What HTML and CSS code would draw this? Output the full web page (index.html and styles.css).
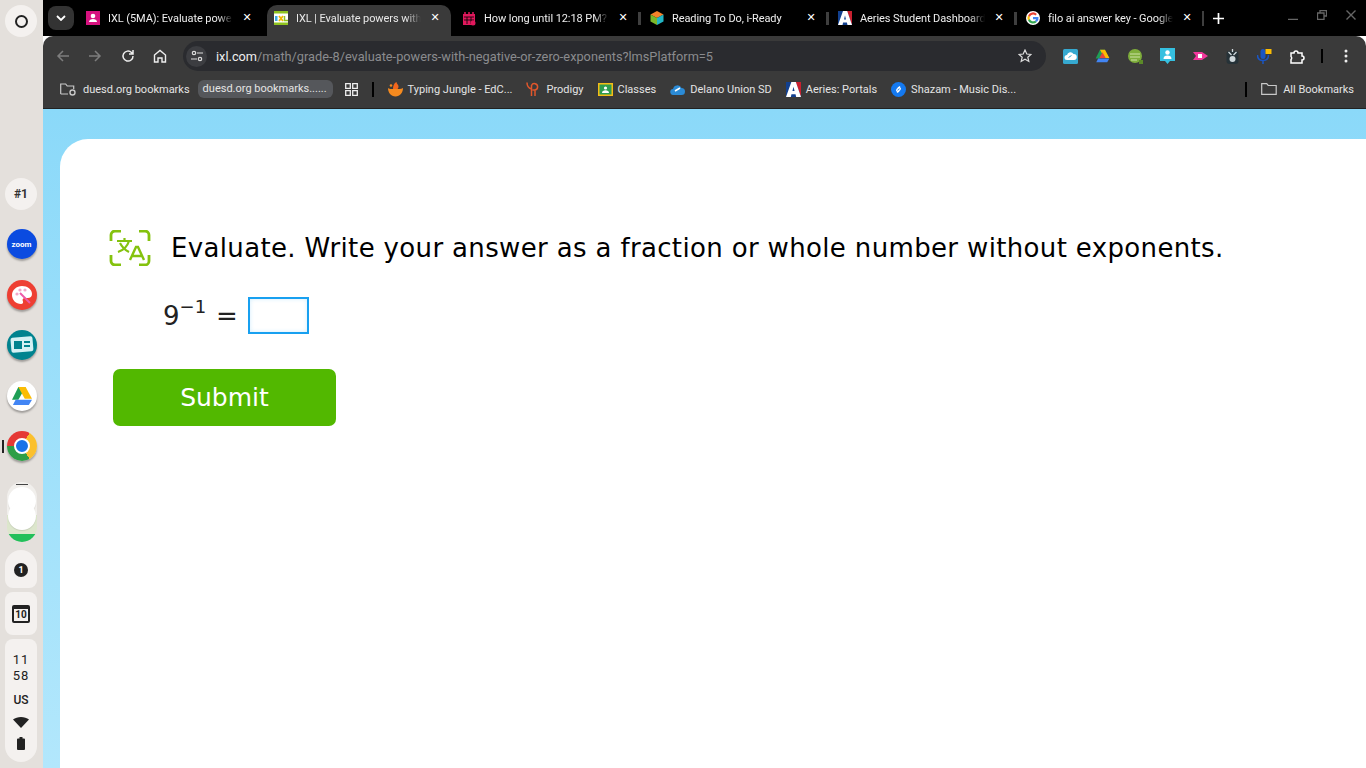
FILE: index.html
```html
<!DOCTYPE html>
<html>
    <head>
        <title>IXL | Evaluate powers with negative or zero exponents</title>
        <link rel="stylesheet" href="styles.css">
    </head>
    <body>
        <div class="shelf">
            <div class="launcher"><div class="launcher-ring"></div></div>
            <div class="pin-top">#1</div>
            <div class="app app-zoom">zoom</div>
            <div class="app app-paint">
                <svg width="22" height="22" viewBox="0 0 22 22"><path d="M11 2C5.500 2 1 6 1 11c0 5 4 9 9 9 2 0 2.500-1.500 1.800-3-.7-1.500.2-3 2-3h3c2.500 0 4.200-1.500 4.200-4C21 5.500 16.500 2 11 2z" fill="#fff"/><circle cx="6" cy="10" r="1.600" fill="#f3a6c8"/><circle cx="9" cy="6" r="1.600" fill="#f3a6c8"/><circle cx="14" cy="6" r="1.600" fill="#f3a6c8"/><path d="M9 9l10 10" stroke="#ee5aa8" stroke-width="2"/></svg>
            </div>
            <div class="app app-card">
                <svg width="24" height="20" viewBox="0 0 24 20"><rect x="1" y="2" width="22" height="15" rx="2" fill="#d5f1f4" transform="rotate(-5 12 10)"/><rect x="4" y="6" width="8" height="8" fill="#00838f"/><rect x="14" y="6" width="6" height="2" fill="#00838f"/><rect x="14" y="10" width="6" height="2" fill="#00838f"/></svg>
            </div>
            <div class="app app-drive">
                <svg width="22" height="20" viewBox="0 0 24 22"><path d="M8 1h8l-8 14H1z" fill="#1e9e55"/><path d="M8 1h8l7 13h-8z" fill="#fbbc04"/><path d="M5 15h18l-3.500 6H2z" fill="#4285f4"/></svg>
            </div>
            <div class="chrome-row">
                <div class="run-mark"></div>
                <div class="app app-chrome"><div class="chrome-ball"></div></div>
            </div>
            <div class="thumb-stack">
                <div class="thumb-line"></div>
                <div class="thumb-circle"></div>
                <div class="thumb-circle thumb-lower"></div>
            </div>
            <div class="tray-pod pod-note"><div class="note-dot">1</div></div>
            <div class="tray-pod pod-date"><div class="date-icon">10</div></div>
            <div class="tray-pod pod-clock">
                <div class="clock">11<br>58</div>
                <div class="lang">US</div>
                <svg width="16" height="12" viewBox="0 0 16 12"><path d="M0 3.500C4 0 12 0 16 3.500L8 12z" fill="#222"/></svg>
                <svg class="battery" width="8" height="13" viewBox="0 0 8 13"><path d="M2.500 0h3v1.500H7a1 1 0 0 1 1 1V12a1 1 0 0 1-1 1H1a1 1 0 0 1-1-1V2.500a1 1 0 0 1 1-1h1.500z" fill="#222"/></svg>
            </div>
        </div>

        <div class="main">
            <div class="tabstrip">
                <div class="tab-search">
                    <svg width="10" height="6" viewBox="0 0 10 6"><path d="M1 1l4 4 4-4" fill="none" stroke="#fff" stroke-width="1.800"/></svg>
                </div>
                <div class="tab">
                    <svg class="tab-icon" width="14" height="14" viewBox="0 0 14 14"><rect width="14" height="14" fill="#d6127f"/><circle cx="7" cy="5" r="2.300" fill="#fff"/><path d="M3 11c0-2 2-3 4-3s4 1 4 3z" fill="#fff"/></svg>
                    <span class="tab-title">IXL (5MA): Evaluate powe</span>
                    <span class="tab-close">✕</span>
                </div>
                <div class="tab tab-active">
                    <svg class="tab-icon" width="14" height="14" viewBox="0 0 14 14"><rect width="14" height="14" fill="#fff"/><rect y="0" width="14" height="2.500" fill="#8fc31f"/><rect y="11.500" width="14" height="2.500" fill="#8fc31f"/><rect x="1" y="5" width="2.500" height="5" fill="#3aa8e0"/><path d="M5 5l4 5M9 5l-4 5" stroke="#f2b600" stroke-width="1.800"/><path d="M10.500 5v4.500H14" fill="none" stroke="#8fc31f" stroke-width="1.500"/></svg>
                    <span class="tab-title">IXL | Evaluate powers with</span>
                    <span class="tab-close">✕</span>
                </div>
                <div class="tab">
                    <svg class="tab-icon" width="14" height="15" viewBox="0 0 14 15"><path d="M1 3h12v11H1z" fill="#e0185c"/><path d="M3 1v3M7 1v3M11 1v3" stroke="#e0185c" stroke-width="1.500"/><path d="M2 6h10M5 6v7M9 6v7M2 9h10" stroke="#000" stroke-width=".8"/><circle cx="11" cy="12" r="2.500" fill="#e0185c"/></svg>
                    <span class="tab-title">How long until 12:18 PM?</span>
                    <span class="tab-close">✕</span>
                </div>
                <div class="tab">
                    <svg class="tab-icon" width="14" height="14" viewBox="0 0 14 14"><path d="M7 0l6.500 3.500L7 7 .5 3.500z" fill="#f5822a"/><path d="M.5 3.500L7 7v7L.5 10.500z" fill="#7ab829"/><path d="M13.500 3.500L7 7v7l6.500-3.500z" fill="#22b5c4"/></svg>
                    <span class="tab-title">Reading To Do, i-Ready</span>
                    <span class="tab-close">✕</span>
                    <span class="tab-sep"></span>
                </div>
                <div class="tab">
                    <svg class="tab-icon" width="14" height="14" viewBox="0 0 14 14"><rect width="14" height="14" fill="#12408f"/><path d="M9 0h5v14z" fill="#c8202f"/><path d="M5 0h4.200L14 14H9.500l-.6-2.500H5.100L4.500 14H0z" fill="#fff"/><path d="M6 8.500h2L7 4.500z" fill="#12408f"/></svg>
                    <span class="tab-title">Aeries Student Dashboard</span>
                    <span class="tab-close">✕</span>
                    <span class="tab-sep"></span>
                </div>
                <div class="tab">
                    <svg class="tab-icon" width="14" height="14" viewBox="0 0 14 14"><circle cx="7" cy="7" r="7" fill="#fff"/><path d="M7 3.500a3.500 3.500 0 0 1 2.400.9l1.500-1.500A5.600 5.600 0 0 0 2 4.500l1.800 1.400A3.500 3.500 0 0 1 7 3.500z" fill="#ea4335"/><path d="M2 4.500a5.600 5.600 0 0 0 0 5l1.800-1.400a3.500 3.500 0 0 1 0-2.200z" fill="#fbbc05"/><path d="M2 9.500a5.600 5.600 0 0 0 8.800 1.600L9 9.700a3.500 3.500 0 0 1-5.200-1.600z" fill="#34a853"/><path d="M12.500 6H7v2.200h3.100A2.700 2.700 0 0 1 9 9.700l1.800 1.400A5.600 5.600 0 0 0 12.500 6z" fill="#4285f4"/></svg>
                    <span class="tab-title">filo ai answer key - Google</span>
                    <span class="tab-close">✕</span>
                    <span class="tab-sep"></span>
                </div>
                <span class="tab-sep-last"></span>
                <svg class="new-tab" width="11" height="11" viewBox="0 0 11 11"><path d="M5.500 0v11M0 5.500h11" stroke="#fff" stroke-width="1.700"/></svg>
                <div class="window-controls">
                    <svg width="10" height="10" viewBox="0 0 10 10"><path d="M0 9.500h10" stroke="#666" stroke-width="1.500"/></svg>
                    <svg width="10" height="10" viewBox="0 0 10 10"><path d="M3 2.500V.5h6.500V6h-2M.5 3h6.500v6.500H.5z" fill="none" stroke="#666" stroke-width="1.300"/></svg>
                    <svg width="10" height="10" viewBox="0 0 10 10"><path d="M.5.500l9 9M9.500.5l-9 9" stroke="#666" stroke-width="1.400"/></svg>
                </div>
            </div>

            <div class="toolbar">
                <svg class="nav-btn" width="14" height="14" viewBox="0 0 14 14"><path d="M13 7H2M7 2L2 7l5 5" fill="none" stroke="#7d7d7d" stroke-width="1.500"/></svg>
                <svg class="nav-btn" width="14" height="14" viewBox="0 0 14 14"><path d="M1 7h11M7 2l5 5-5 5" fill="none" stroke="#7d7d7d" stroke-width="1.500"/></svg>
                <svg class="nav-btn" width="14" height="14" viewBox="0 0 14 14"><path d="M12 7a5 5 0 1 1-1.500-3.500L12 5M12 1v4H8" fill="none" stroke="#eee" stroke-width="1.500"/></svg>
                <svg class="nav-btn" width="14" height="14" viewBox="0 0 14 14"><path d="M1.500 6L7 1.500 12.500 6v7H9V9H5v4H1.500z" fill="none" stroke="#eee" stroke-width="1.400"/></svg>
                <div class="omnibox">
                    <div class="site-info">
                        <svg width="12" height="12" viewBox="0 0 12 12"><circle cx="3" cy="3" r="1.700" fill="none" stroke="#ddd" stroke-width="1.200"/><path d="M6 3h6M0 9h6" stroke="#ddd" stroke-width="1.200"/><circle cx="9" cy="9" r="1.700" fill="none" stroke="#ddd" stroke-width="1.200"/></svg>
                    </div>
                    <span class="url"><span class="url-host">ixl.com</span>/math/grade-8/evaluate-powers-with-negative-or-zero-exponents?lmsPlatform=5</span>
                    <svg class="star" width="14" height="14" viewBox="0 0 14 14"><path d="M7 1l1.800 4 4.200.4-3.200 2.800 1 4.200L7 10.200l-3.800 2.200 1-4.200L1 5.400 5.200 5z" fill="none" stroke="#ddd" stroke-width="1.200"/></svg>
                </div>
                <div class="extensions">
                    <svg width="15" height="15" viewBox="0 0 15 15"><rect width="15" height="15" rx="1.500" fill="#36a9d0"/><path d="M4 11a2.500 2.500 0 0 1 0-5 3.500 3.500 0 0 1 6.500-1A3 3 0 0 1 11 11z" fill="#fff"/><path d="M5.500 8.500l3-2" stroke="#36a9d0"/></svg>
                    <svg width="15" height="14" viewBox="0 0 24 22"><path d="M8 1h8l-8 14H1z" fill="#1e9e55"/><path d="M8 1h8l7 13h-8z" fill="#fbbc04"/><path d="M5 15h18l-3.500 6H2z" fill="#4285f4"/><path d="M12 5l5 9H7z" fill="#e8453c"/></svg>
                    <svg width="15" height="15" viewBox="0 0 15 15"><circle cx="7" cy="7" r="7" fill="#7fae3c"/><path d="M2 5h10M2 8h10M3 11h6" stroke="#cfe3a8" stroke-width="1"/><rect x="11" y="11" width="4" height="4" fill="#5c8a28"/></svg>
                    <svg width="15" height="16" viewBox="0 0 15 16"><path d="M0 0h15v13h-5l-2.500 3L5 13H0z" fill="#35c0e0"/><circle cx="7.500" cy="4.500" r="2.200" fill="#fff"/><path d="M3.500 11c0-2.500 1.500-3.500 4-3.500s4 1 4 3.500z" fill="#fff"/></svg>
                    <svg width="15" height="12" viewBox="0 0 15 12"><path d="M0 2h9l6 4-6 4H0l3-4z" fill="#f0389c"/><rect x="5" y="4" width="4" height="4" fill="#fff"/></svg>
                    <svg width="15" height="15" viewBox="0 0 14 15"><rect x="1" y="2" width="12" height="13" rx="3" fill="#263238"/><circle cx="7" cy="10" r="3" fill="#cfd8dc"/><path d="M3 3l3 3M11 3L8 6M7 0v3" stroke="#cfd8dc" stroke-width="1.300"/></svg>
                    <svg width="15" height="15" viewBox="0 0 14 15"><rect x="3" y="0" width="5" height="10" rx="2.500" fill="#1a56c4"/><path d="M0 6c0 4 2.500 5.500 5.500 5.500S11 10 11 6M5.500 11v4" fill="none" stroke="#1a56c4" stroke-width="1.500"/><rect x="8" y="0" width="6" height="5" fill="#fbbc04"/></svg>
                    <svg width="15" height="15" viewBox="0 0 15 15"><path d="M1 4h3a2 2 0 0 1 4 0h4v3a2 2 0 0 1 0 4v3H1v-3.500a2 2 0 0 0 0-3z" fill="none" stroke="#fff" stroke-width="1.500"/></svg>
                </div>
                <div class="bar-mark"></div>
                <svg class="menu-dots" width="4" height="14" viewBox="0 0 4 14"><circle cx="2" cy="2" r="1.500" fill="#eee"/><circle cx="2" cy="7" r="1.500" fill="#eee"/><circle cx="2" cy="12" r="1.500" fill="#eee"/></svg>
            </div>

            <div class="bookmarks">
                <div class="bookmark bm-folder">
                    <svg width="17" height="13" viewBox="0 0 17 13"><path d="M.7 11V1h5l1.500 2h6.500v3M.7 11H8" fill="none" stroke="#c8c8c8" stroke-width="1.200"/><circle cx="12.500" cy="9.500" r="2.500" fill="none" stroke="#c8c8c8" stroke-width="1.400"/></svg>
                    <span>duesd.org bookmarks</span>
                </div>
                <div class="bm-chip">duesd.org bookmarks......</div>
                <svg class="bm-grid" width="13" height="13" viewBox="0 0 13 13"><path d="M.7.7h4.600v4.600H.7zM7.700.7h4.600v4.600H7.700zM.7 7.700h4.600v4.600H.7zM7.700 7.700h4.600v4.600H7.700z" fill="none" stroke="#eee" stroke-width="1.300"/></svg>
                <div class="bm-mark"></div>
                <div class="bookmark">
                    <svg width="15" height="15" viewBox="0 0 15 15"><path d="M0 6c1 .8 2 1 3.500 1 2.500 0 6 0 8 0 1.200 0 2.500-.3 3.500-1 0 4.500-3 8.500-7.500 8.500S0 10.500 0 6z" fill="#f58a1f"/><path d="M5 7C5 4 6 1 8.500 0c0 2 2 2.500 2 4.500 0 1-.5 2-1 2.500z" fill="#f4661c"/><circle cx="3" cy="3.500" r="1.300" fill="#f58a1f"/></svg>
                    <span>Typing Jungle - EdC...</span>
                </div>
                <div class="bookmark">
                    <svg width="15" height="16" viewBox="0 0 15 16"><path d="M5.500 15V4.500a3.200 3.200 0 1 1 3.200 4.500H6.500M9 15V9M1 1.500C1 5 2.500 7 5.500 8" fill="none" stroke="#e0562b" stroke-width="1.500"/></svg>
                    <span>Prodigy</span>
                </div>
                <div class="bookmark">
                    <svg width="15" height="13" viewBox="0 0 15 13"><rect width="15" height="13" fill="#f5bd15"/><rect x="1.500" y="1.500" width="12" height="10" fill="#2e9b4e"/><circle cx="7.500" cy="5" r="1.600" fill="#fff"/><path d="M4 10c0-2 1.500-2.800 3.500-2.800S11 8 11 10z" fill="#fff"/></svg>
                    <span>Classes</span>
                </div>
                <div class="bookmark">
                    <svg width="15" height="11" viewBox="0 0 15 11"><path d="M3.500 11a3 3 0 0 1-.5-6 4.500 4.500 0 0 1 8.500-1 3.500 3.500 0 0 1 0 7z" fill="#2b8bd6"/><path d="M5 7l5-3" stroke="#fff" stroke-width="1.500"/></svg>
                    <span>Delano Union SD</span>
                </div>
                <div class="bookmark">
                    <svg width="15" height="15" viewBox="0 0 14 14"><rect width="14" height="14" fill="#12408f"/><path d="M9 0h5v14z" fill="#c8202f"/><path d="M5 0h4.200L14 14H9.500l-.6-2.500H5.100L4.500 14H0z" fill="#fff"/><path d="M6 8.500h2L7 4.500z" fill="#12408f"/></svg>
                    <span>Aeries: Portals</span>
                </div>
                <div class="bookmark">
                    <svg width="15" height="15" viewBox="0 0 15 15"><circle cx="7.500" cy="7.500" r="7.500" fill="#1479f0"/><path d="M9 4.500L6 7.500a1.200 1.200 0 0 0 2 1.500M6 10.500l3-3a1.200 1.200 0 0 0-2-1.500" fill="none" stroke="#fff" stroke-width="1.300"/></svg>
                    <span>Shazam - Music Dis...</span>
                </div>
                <div class="bm-end">
                    <div class="bm-mark"></div>
                    <div class="bookmark bm-folder">
                        <svg width="16" height="12" viewBox="0 0 16 12"><path d="M.7 11.300V.7h5l1.500 1.800h8v8.800z" fill="none" stroke="#c8c8c8" stroke-width="1.200"/></svg>
                        <span>All Bookmarks</span>
                    </div>
                </div>
            </div>

            <div class="page">
                <div class="card">
                    <div class="prompt-row">
                        <svg class="translate" width="42" height="36" viewBox="0 0 42 36">
                            <path d="M2 11V5a4 4 0 0 1 4-4h6M30 1h6a4 4 0 0 1 4 4v6M40 25v6a4 4 0 0 1-4 4h-6M12 35H6a4 4 0 0 1-4-4v-6" fill="none" stroke="#84c20e" stroke-width="2.800"/>
                            <path d="M8 11h15M15.500 8v3M20 11c-1.500 5-5 9-11 11M11 13c2 4 5 7 9 9" fill="none" stroke="#84c20e" stroke-width="2.200"/>
                            <path d="M21 30l6-13h2l6 13M23.500 26h9" fill="none" stroke="#84c20e" stroke-width="2.400"/>
                        </svg>
                        <span class="prompt">Evaluate. Write your answer as a fraction or whole number without exponents.</span>
                    </div>
                    <div class="equation">
                        <span class="base">9<sup class="power">−1</sup></span>
                        <span class="equals">=</span>
                        <input class="answer" type="text">
                    </div>
                    <button class="submit">Submit</button>
                </div>
            </div>
        </div>
    </body>
</html>
```

FILE: styles.css
```css
html, body{
    margin: 0;
    height: 100%;
    overflow: hidden;
}
body{
    display: flex;
    width: 1366px;
    height: 768px;
    font-family: Roboto, "Liberation Sans", sans-serif;
}

/* left shelf */
.shelf{
    width: 43px;
    flex: none;
    background-color: #e4e0dc;
    display: flex;
    flex-direction: column;
    align-items: center;
    padding-top: 5px;
    box-sizing: border-box;
}
.launcher{
    width: 32px;
    height: 32px;
    border-radius: 50%;
    background-color: #f4f1ef;
    display: flex;
    align-items: center;
    justify-content: center;
    margin-left: -1px;
}
.launcher-ring{
    width: 9px;
    height: 9px;
    border: 2px solid #222;
    border-radius: 50%;
}
.pin-top{
    width: 32px;
    height: 32px;
    margin: 141px 0 0 -1px;
    border-radius: 50%;
    background-color: #f4f1ef;
    color: #333;
    font-size: 12px;
    font-weight: 700;
    display: flex;
    align-items: center;
    justify-content: center;
}
.app{
    width: 30px;
    height: 30px;
    border-radius: 50%;
    display: flex;
    align-items: center;
    justify-content: center;
    box-shadow: 0 2px 2px rgba(0,0,0,0.3);
}
.app-zoom{
    margin-top: 19px;
    background-color: #0b4be0;
    color: #fff;
    font-size: 8px;
    font-weight: 700;
}
.app-paint{
    margin-top: 21px;
    background-color: #ee3f33;
}
.app-card{
    margin-top: 20px;
    background-color: #00838f;
}
.app-drive{
    margin-top: 21px;
    background-color: #fff;
}
.chrome-row{
    margin-top: 20px;
    width: 43px;
    display: flex;
    align-items: center;
    position: relative;
    justify-content: center;
}
.run-mark{
    position: absolute;
    left: 2px;
    top: 9px;
    width: 2px;
    height: 13px;
    background-color: #222;
}
.app-chrome{
    background: conic-gradient(from 30deg, #fbc02d 0 120deg, #2e9e46 120deg 240deg, #e53935 240deg 360deg);
}
.chrome-ball{
    width: 12px;
    height: 12px;
    border: 2px solid #fff;
    border-radius: 50%;
    background-color: #1a73e8;
}
.thumb-stack{
    margin-top: 21px;
    width: 30px;
    height: 60px;
    border-radius: 15px;
    overflow: hidden;
    background: linear-gradient(#f1efec 55%, #dce6cc 55%, #dce6cc 86%, #22c05a 86%);
}
.thumb-line{
    width: 12px;
    height: 1px;
    margin: 2px auto 0;
    background-color: #444;
}
.thumb-circle{
    width: 28px;
    height: 28px;
    margin: 2px 0 0 1px;
    border-radius: 50%;
    background-color: #fff;
    box-shadow: 0 1px 1px rgba(0,0,0,0.1);
}
.thumb-lower{
    margin-top: -13px;
}
.tray-pod{
    width: 32px;
    margin-left: -1px;
    background-color: #f4f1ef;
    display: flex;
    flex-direction: column;
    align-items: center;
}
.pod-note{
    height: 38px;
    margin-top: 8px;
    padding-top: 1px;
    box-sizing: border-box;
    justify-content: center;
    border-radius: 16px 16px 8px 8px;
}
.note-dot{
    width: 14px;
    height: 14px;
    border-radius: 50%;
    background-color: #222;
    color: #fff;
    font-size: 9px;
    font-weight: 700;
    text-align: center;
    line-height: 14px;
}
.pod-date{
    height: 43px;
    margin-top: 4px;
    justify-content: center;
    border-radius: 8px;
}
.date-icon{
    width: 14px;
    height: 12px;
    border: 2px solid #222;
    border-top-width: 4px;
    border-radius: 2px;
    color: #222;
    font-size: 10px;
    font-weight: 700;
    text-align: center;
    line-height: 12px;
}
.pod-clock{
    height: 123px;
    margin-top: 4px;
    padding-top: 13px;
    box-sizing: border-box;
    border-radius: 8px 8px 16px 16px;
    color: #222;
}
.clock{
    font-size: 13px;
    line-height: 16px;
    text-align: center;
    letter-spacing: 1px;
}
.lang{
    font-size: 12px;
    font-weight: 500;
    margin: 9px 0 9px;
}
.battery{
    margin-top: 9px;
}

/* browser */
.main{
    flex: 1;
    min-width: 0;
    display: flex;
    flex-direction: column;
}
.tabstrip{
    height: 36px;
    flex: none;
    background-color: #000;
    display: flex;
    align-items: center;
    padding-left: 5px;
}
.tab-search{
    width: 26px;
    height: 24px;
    flex: none;
    margin-right: 5px;
    border-radius: 8px;
    background-color: #333;
    display: flex;
    align-items: center;
    justify-content: center;
}
.tab{
    width: 188px;
    height: 31px;
    flex: none;
    margin-top: 5px;
    box-sizing: border-box;
    padding: 0 0 5px 7px;
    display: flex;
    align-items: center;
    position: relative;
    color: #eee;
    font-size: 11px;
    letter-spacing: -0.08px;
}
.tab-active{
    background-color: #3a3a3a;
    border-radius: 10px 10px 0 0;
    width: 184px;
    margin-right: 4px;
    color: #e8e8e8;
}
.tab-icon{
    flex: none;
    margin-right: 8px;
}
.tab-title{
    width: 125px;
    white-space: nowrap;
    overflow: hidden;
    -webkit-mask-image: linear-gradient(to right, #000 88%, transparent);
    mask-image: linear-gradient(to right, #000 88%, transparent);
}
.tab-close{
    margin: -2px 0 0 9.500px;
    color: #fff;
    font-size: 11px;
    font-weight: 700;
    font-family: "DejaVu Sans", sans-serif;
}
.tab-sep{
    position: absolute;
    left: -5px;
    top: 7px;
    width: 3px;
    height: 13px;
    background-color: #3f3f3f;
}
.tab-sep-last{
    width: 2px;
    height: 15px;
    flex: none;
    margin: 0 0 0 -5px;
    background-color: #3f3f3f;
}
.new-tab{
    margin: 1px 0 0 9px;
    flex: none;
}
.window-controls{
    margin-left: auto;
    width: 78px;
    display: flex;
    align-items: center;
    gap: 19px;
    padding-bottom: 6px;
}

.toolbar{
    height: 36px;
    flex: none;
    background-color: #3a3a3a;
    border-radius: 10px 10px 0 0;
    display: flex;
    align-items: center;
    padding: 4px 0 0 13px;
    box-sizing: border-box;
}
.nav-btn{
    flex: none;
    margin-right: 18.300px;
}
.omnibox{
    width: 863px;
    height: 30px;
    flex: none;
    margin-left: -2.200px;
    border-radius: 15px;
    background-color: #2a2b2f;
    display: flex;
    align-items: center;
    box-sizing: border-box;
    padding: 0 14px 0 3px;
}
.site-info{
    width: 21px;
    height: 21px;
    border-radius: 50%;
    background-color: #3c3d41;
    display: flex;
    align-items: center;
    justify-content: center;
    flex: none;
}
.url{
    margin-left: 9px;
    color: #8a8b8e;
    font-size: 12.750px;
    white-space: nowrap;
}
.url-host{
    color: #eee;
}
.star{
    margin-left: auto;
    flex: none;
}
.extensions{
    display: flex;
    align-items: center;
    gap: 17.400px;
    margin-left: 17px;
}
.extensions svg{
    flex: none;
}
.bar-mark{
    width: 2px;
    height: 14px;
    margin-left: 16px;
    background-color: #000;
}
.menu-dots{
    margin-left: 21px;
}

.bookmarks{
    height: 37px;
    flex: none;
    box-sizing: border-box;
    background-color: #3a3a3a;
    border-bottom: 1px solid #222;
    display: flex;
    align-items: center;
    padding: 0 12px 2px 17px;
    color: #e4e4e4;
    font-size: 11px;
    gap: 14px;
}
.bookmark{
    display: flex;
    align-items: center;
    gap: 5px;
    white-space: nowrap;
}
.bm-folder{
    gap: 6px;
}
.bookmark svg{
    flex: none;
}
.bm-chip{
    width: 135px;
    height: 18px;
    margin-left: -6px;
    box-sizing: border-box;
    padding-left: 5px;
    border-radius: 6px;
    background-color: #55575b;
    line-height: 18px;
    white-space: nowrap;
}
.bm-grid{
    margin-left: -2px;
    flex: none;
}
.bm-mark{
    width: 2px;
    height: 15px;
    background-color: #000;
    flex: none;
}
.bm-end{
    margin-left: auto;
    display: flex;
    align-items: center;
    gap: 14px;
}

/* page */
.page{
    flex: 1;
    background: linear-gradient(#8bd9f9, #b2e7fc);
    padding: 30px 0 0 17px;
    display: flex;
}
.card{
    flex: 1;
    background-color: #fff;
    border-radius: 28px 0 0 0;
    padding-top: 91px;
    font-family: "DejaVu Sans", Verdana, sans-serif;
    color: #000;
}
.prompt-row{
    display: flex;
    align-items: center;
    padding-left: 49px;
}
.translate{
    flex: none;
    margin-right: 20px;
}
.prompt{
    font-size: 26px;
    letter-spacing: 0.350px;
    white-space: nowrap;
}
.equation{
    display: flex;
    align-items: center;
    margin: 31px 0 0 103px;
    font-size: 26px;
    color: #222;
}
.power{
    font-size: 18px;
    line-height: 0;
    vertical-align: 12px;
}
.equals{
    margin-left: 10px;
}
.answer{
    width: 61px;
    height: 37px;
    margin: 0 0 0 10px;
    padding: 0;
    box-sizing: border-box;
    border: 2px solid #18a0f0;
    background-color: #fff;
    box-shadow: inset 0 0 4px rgba(24,160,240,0.2);
}
.submit{
    display: block;
    width: 223px;
    height: 57px;
    margin: 35px 0 0 53px;
    border: none;
    border-radius: 7px;
    background-color: #52b800;
    color: #fff;
    font-family: "DejaVu Sans", Verdana, sans-serif;
    font-size: 25px;
}
```
